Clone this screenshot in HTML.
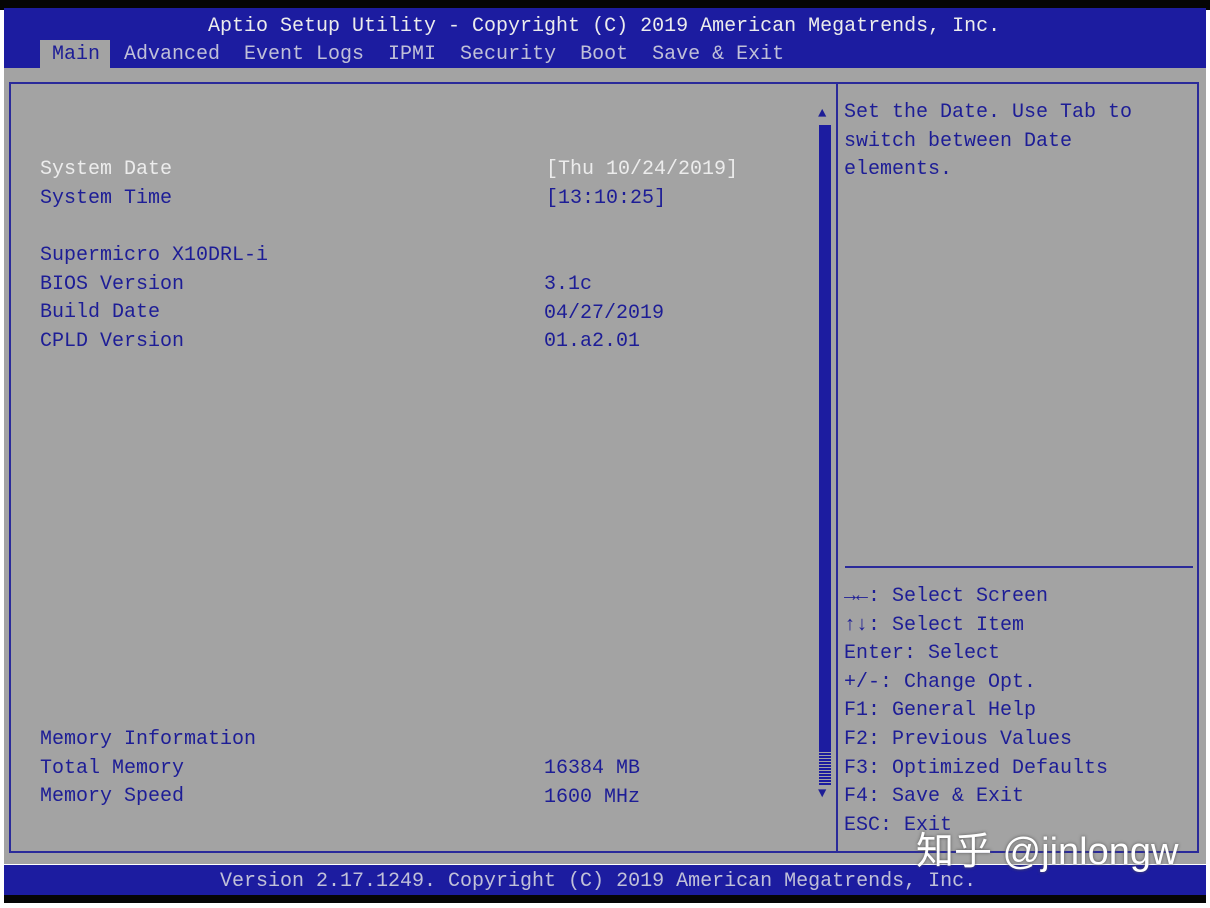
<!DOCTYPE html>
<html><head><meta charset="utf-8"><style>
*{margin:0;padding:0;box-sizing:border-box}
body{width:1210px;height:908px;background:#fff;position:relative;overflow:hidden;font-family:"Liberation Mono",monospace;font-size:20px}
.a{position:absolute;white-space:pre;line-height:28px}
.w{color:#ececec}.b{color:#1d1d96}.g{color:#c0c0d8}
</style></head><body>
<div style="position:absolute;left:0;top:0;width:1210px;height:10px;background:#050505"></div>
<div style="position:absolute;left:4px;top:8px;width:1202px;height:60px;background:#1c1ca0"></div>
<div class="a w" style="left:208px;top:13px">Aptio Setup Utility - Copyright (C) 2019 American Megatrends, Inc.</div>
<div style="position:absolute;left:40px;top:40px;width:70px;height:28px;background:#a3a3a3"></div>
<div class="a b" style="left:52px;top:41px">Main</div>
<div class="a g" style="left:124px;top:41px">Advanced  Event Logs  IPMI  Security  Boot  Save &amp; Exit</div>
<div style="position:absolute;left:4px;top:68px;width:1202px;height:796px;background:#a3a3a3"></div>
<div style="position:absolute;left:9px;top:82px;width:1190px;height:771px;border:2px solid #2a2a9a"></div>
<div style="position:absolute;left:836px;top:82px;width:2px;height:771px;background:#2a2a9a"></div>
<div style="position:absolute;left:845px;top:566px;width:348px;height:2px;background:#2a2a9a"></div>
<div style="position:absolute;left:819px;top:125px;width:12px;height:627px;background:#1c1ca0"></div>
<div style="position:absolute;left:819px;top:752px;width:12px;height:33px;background:repeating-linear-gradient(0deg,#1c1ca0 0 2px,#a3a3a3 2px 3px)"></div>
<div class="a b" style="left:818px;top:100px;font-size:14px">▲</div>
<div class="a b" style="left:818px;top:780px;font-size:14px">▼</div>
<div class="a w" style="left:40px;top:156px">System Date</div>
<div class="a b" style="left:40px;top:185px">System Time</div>
<div class="a w" style="left:546px;top:156px">[Thu 10/24/2019]</div>
<div class="a b" style="left:546px;top:185px">[13:10:25]</div>
<div class="a b" style="left:40px;top:242px;line-height:28.6px">Supermicro X10DRL-i
BIOS Version
Build Date
CPLD Version</div>
<div class="a b" style="left:544px;top:271px;line-height:28.6px">3.1c
04/27/2019
01.a2.01</div>
<div class="a b" style="left:40px;top:726px;line-height:28.6px">Memory Information
Total Memory
Memory Speed</div>
<div class="a b" style="left:544px;top:755px;line-height:28.6px">16384 MB
1600 MHz</div>
<div class="a b" style="left:844px;top:99px;line-height:28.6px">Set the Date. Use Tab to
switch between Date
elements.</div>
<div class="a b" style="left:844px;top:583px;line-height:28.6px"><b>→←</b>: Select Screen
<b>↑↓</b>: Select Item
Enter: Select
+/-: Change Opt.
F1: General Help
F2: Previous Values
F3: Optimized Defaults
F4: Save &amp; Exit
ESC: Exit</div>
<div style="position:absolute;left:4px;top:865px;width:1202px;height:30px;background:#1c1ca0"></div>
<div style="position:absolute;left:4px;top:895px;width:1202px;height:8px;background:#050505"></div>
<div class="a g" style="left:220px;top:868px">Version 2.17.1249. Copyright (C) 2019 American Megatrends, Inc.</div>
<div class="a" style="left:916px;top:830px;font-family:'Liberation Sans','Noto Sans CJK SC',sans-serif;font-size:38px;color:#fff;line-height:44px;text-shadow:0 0 3px #555">知乎 @jinlongw</div>
</body></html>
